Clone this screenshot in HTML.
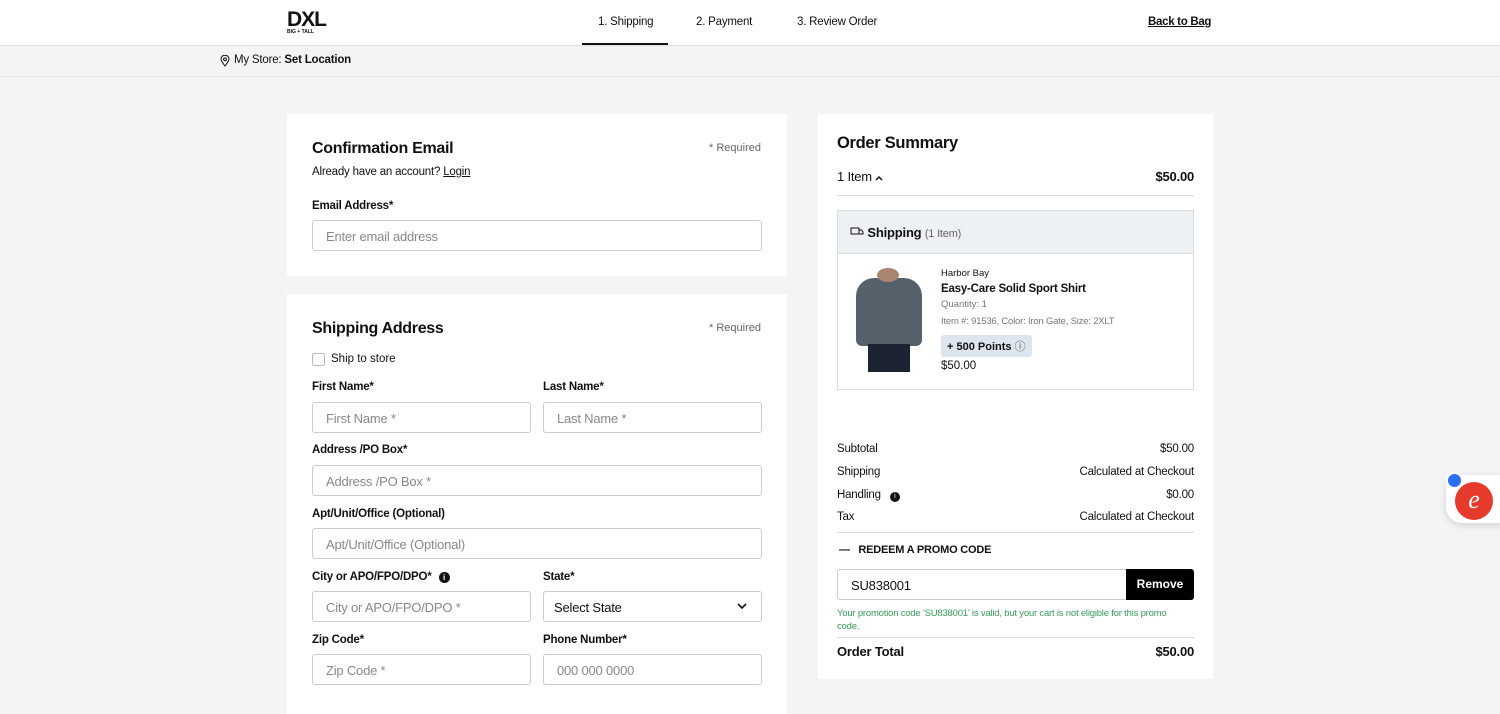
<!DOCTYPE html>
<html><head><meta charset="utf-8"><style>
*{box-sizing:border-box;margin:0;padding:0}
body{width:1500px;height:712px;overflow:hidden;background:#f3f4f6;font-family:"Liberation Sans",sans-serif;color:#111;font-size:13px}
.hdr{height:46px;background:#fff;border-bottom:1px solid #ddd;position:relative}
.logo{position:absolute;left:287px;top:11px;font-weight:bold;font-size:21px;letter-spacing:-1px;line-height:18px}
.logo small{display:block;font-size:5px;letter-spacing:0;line-height:6px}
.tab{position:absolute;top:16px;font-size:11.5px;letter-spacing:-.2px}
.ul{position:absolute;left:582px;top:43px;width:86px;height:2px;background:#111}
.back{position:absolute;left:1148px;top:16px;font-weight:bold;text-decoration:underline;font-size:11.5px;letter-spacing:-.3px}
.store{height:31px;border-bottom:1px solid #e3e3e3;padding:8px 0 0 234px;font-size:11.5px;letter-spacing:-.2px;position:relative}
.card{position:absolute;background:#fff}
.h{font-size:16px;font-weight:bold;position:absolute;letter-spacing:-.3px}
.req{position:absolute;color:#666;font-size:11px}
.lbl{position:absolute;font-size:11.5px;font-weight:bold;letter-spacing:-.2px}
.in{position:absolute;height:31px;border:1px solid #ccc;border-radius:3px;padding:8px 13px;color:#888;font-size:13px;letter-spacing:-.2px}
.row{position:absolute;left:19px;right:19px;display:flex;justify-content:space-between;font-size:11.5px;letter-spacing:-.2px}
</style></head><body>
<div class="hdr">
<div class="logo">DXL<small>BIG + TALL</small></div>
<div class="tab" style="left:598px">1. Shipping</div>
<div class="tab" style="left:696px">2. Payment</div>
<div class="tab" style="left:797px">3. Review Order</div>
<div class="ul"></div>
<div class="back">Back to Bag</div>
</div>
<div class="store"><svg style="position:absolute;left:220px;top:9px" width="10" height="12" viewBox="0 0 10 12"><path d="M5 11C2 7 1 5.5 1 4.2A4 4 0 0 1 9 4.2C9 5.5 8 7 5 11Z" fill="none" stroke="#111"/><circle cx="5" cy="4.3" r="1.4" fill="none" stroke="#111"/></svg>My Store: <b>Set Location</b></div>

<div class="card" style="left:287px;top:114px;width:500px;height:162px">
<div class="h" style="left:25px;top:26px">Confirmation Email</div>
<div class="req" style="left:422px;top:28px">* Required</div>
<div style="position:absolute;left:25px;top:52px;font-size:11.5px;letter-spacing:-.2px">Already have an account? <u>Login</u></div>
<div class="lbl" style="left:25px;top:86px">Email Address*</div>
<div class="in" style="left:25px;top:106px;width:450px">Enter email address</div>
</div>

<div class="card" style="left:287px;top:294px;width:500px;height:420px">
<div class="h" style="left:25px;top:26px">Shipping Address</div>
<div class="req" style="left:422px;top:28px">* Required</div>
<div style="position:absolute;left:25px;top:59px;width:13px;height:13px;border:1px solid #bbb;border-radius:2px"></div>
<div style="position:absolute;left:44px;top:59px;font-size:11.5px">Ship to store</div>
<div class="lbl" style="left:25px;top:87px">First Name*</div><div class="lbl" style="left:256px;top:87px">Last Name*</div>
<div class="in" style="left:25px;top:108px;width:219px">First Name *</div><div class="in" style="left:256px;top:108px;width:219px">Last Name *</div>
<div class="lbl" style="left:25px;top:150px">Address /PO Box*</div>
<div class="in" style="left:25px;top:171px;width:450px">Address /PO Box *</div>
<div class="lbl" style="left:25px;top:214px">Apt/Unit/Office (Optional)</div>
<div class="in" style="left:25px;top:234px;width:450px">Apt/Unit/Office (Optional)</div>
<div class="lbl" style="left:25px;top:277px">City or APO/FPO/DPO* <span style="display:inline-block;width:11px;height:11px;border-radius:50%;background:#111;color:#fff;font-size:8px;text-align:center;line-height:11px;margin-left:4px">i</span></div>
<div class="lbl" style="left:256px;top:277px">State*</div>
<div class="in" style="left:25px;top:297px;width:219px">City or APO/FPO/DPO *</div>
<div class="in" style="left:256px;top:297px;width:219px;color:#111;padding-left:10px">Select State<svg style="position:absolute;right:14px;top:11px" width="10" height="7" viewBox="0 0 10 7"><path d="M1 1L5 5L9 1" fill="none" stroke="#111" stroke-width="1.6"/></svg></div>
<div class="lbl" style="left:25px;top:340px">Zip Code*</div><div class="lbl" style="left:256px;top:340px">Phone Number*</div>
<div class="in" style="left:25px;top:360px;width:219px">Zip Code *</div><div class="in" style="left:256px;top:360px;width:219px">000 000 0000</div>
</div>

<div class="card" style="left:818px;top:114px;width:395px;height:565px">
<div class="h" style="left:19px;top:20px;font-size:16.5px">Order Summary</div>
<div class="row" style="top:55px;font-size:13px"><span>1 Item <svg width="8" height="6" viewBox="0 0 8 6"><path d="M1 5L4 2L7 5" fill="none" stroke="#111" stroke-width="1.5"/></svg></span><b>$50.00</b></div>
<div style="position:absolute;left:19px;right:19px;top:81px;border-top:1px solid #ddd"></div>
<div style="position:absolute;left:19px;top:96px;width:357px;height:180px;border:1px solid #ddd">
<div style="height:43px;background:#eef1f4;border-bottom:1px solid #ddd;padding:14px 12px;font-size:13px;letter-spacing:-.2px"><svg width="14" height="10" viewBox="0 0 14 10"><path d="M1 1H9V7H1Z M9 3H11.5L13 5V7H9" fill="none" stroke="#111"/></svg> <b>Shipping</b> <span style="color:#666;font-size:11px">(1 Item)</span></div>
<div style="position:absolute;left:16px;top:57px;width:70px;height:104px">
<div style="position:absolute;left:2px;top:10px;width:66px;height:68px;background:#56626b;border-radius:18px 18px 6px 6px"></div>
<div style="position:absolute;left:23px;top:0;width:22px;height:14px;background:#a98670;border-radius:50%"></div>
<div style="position:absolute;left:14px;top:76px;width:42px;height:28px;background:#1d2332"></div></div>
<div style="position:absolute;left:103px;top:57px;font-size:9.5px">Harbor Bay</div>
<div style="position:absolute;left:103px;top:72px;font-size:11.5px;font-weight:bold;letter-spacing:-.2px">Easy-Care Solid Sport Shirt</div>
<div style="position:absolute;left:103px;top:88px;font-size:9.5px;color:#777">Quantity: 1</div>
<div style="position:absolute;left:103px;top:105px;font-size:9.5px;color:#777;letter-spacing:-.2px">Item #: 91536, Color: Iron Gate, Size: 2XLT</div>
<div style="position:absolute;left:103px;top:124px;background:#dde5ee;border-radius:3px;padding:3px 6px;font-size:11px;font-weight:bold">+ 500 Points <span style="font-weight:normal;color:#555">&#9432;</span></div>
<div style="position:absolute;left:103px;top:149px;font-size:11.5px">$50.00</div>
</div>
<div class="row" style="top:329px"><span>Subtotal</span><span>$50.00</span></div>
<div class="row" style="top:352px"><span>Shipping</span><span>Calculated at Checkout</span></div>
<div class="row" style="top:375px"><span>Handling <span style="display:inline-block;width:10px;height:10px;border-radius:50%;background:#111;color:#fff;font-size:7px;text-align:center;line-height:10px;margin-left:6px">i</span></span><span>$0.00</span></div>
<div class="row" style="top:397px"><span>Tax</span><span>Calculated at Checkout</span></div>
<div style="position:absolute;left:19px;right:19px;top:418px;border-top:1px solid #ddd"></div>
<div style="position:absolute;left:21px;top:430px;font-size:11px;font-weight:bold;letter-spacing:-.2px">&#8212;&nbsp;&nbsp; REDEEM A PROMO CODE</div>
<div class="in" style="left:19px;top:455px;width:290px;color:#111;border-radius:3px 0 0 3px">SU838001</div>
<div style="position:absolute;left:308px;top:455px;width:68px;height:31px;background:#000;color:#fff;font-weight:bold;font-size:12px;text-align:center;line-height:31px;border-radius:0 3px 3px 0">Remove</div>
<div style="position:absolute;left:19px;top:493px;width:340px;font-size:9.5px;color:#3a9a5a;line-height:13px;letter-spacing:-.2px">Your promotion code 'SU838001' is valid, but your cart is not eligible for this promo code.</div>
<div style="position:absolute;left:19px;right:19px;top:523px;border-top:1px solid #ddd"></div>
<div class="row" style="top:530px;font-size:13px"><b>Order Total</b><b>$50.00</b></div>
</div>

<div style="position:absolute;left:1446px;top:475px;width:70px;height:48px;background:#fff;border-radius:16px;box-shadow:0 2px 8px rgba(0,0,0,.15)"></div>
<div style="position:absolute;left:1455px;top:482px;width:38px;height:38px;border-radius:50%;background:#e53a2c;color:#fff;font-size:26px;text-align:center;line-height:36px;font-family:'Liberation Serif',serif;font-style:italic">e</div>
<div style="position:absolute;left:1446px;top:472px;width:17px;height:17px;border-radius:50%;background:#2a6ff0;border:2px solid #fff"></div>
</body></html>
